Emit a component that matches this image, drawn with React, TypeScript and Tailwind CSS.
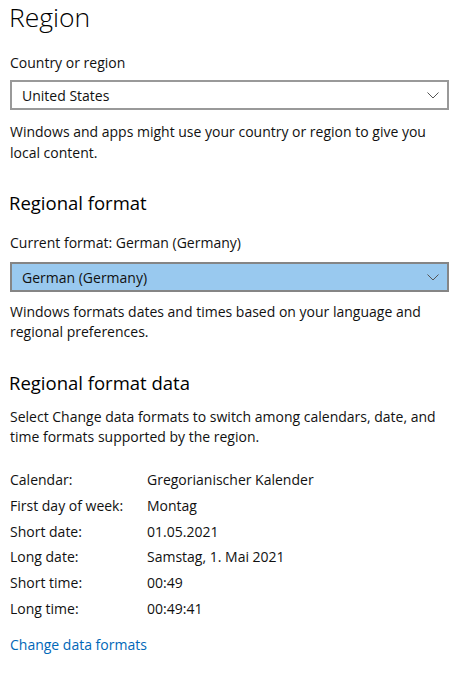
import React from "react";

function Chevron() {
  return (
    <svg width="12" height="7" viewBox="0 0 12 7" className="shrink-0">
      <path d="M0.5 0.5 L6 6 L11.5 0.5" fill="none" stroke="#555" strokeWidth="1" />
    </svg>
  );
}

const rows: [string, string][] = [
  ["Calendar:", "Gregorianischer Kalender"],
  ["First day of week:", "Montag"],
  ["Short date:", "01.05.2021"],
  ["Long date:", "Samstag, 1. Mai 2021"],
  ["Short time:", "00:49"],
  ["Long time:", "00:49:41"],
];

export default function App() {
  return (
    <div
      className="w-[474px] h-[681px] bg-white text-[#111] px-[10px] overflow-hidden"
      style={{ fontFamily: '"Open Sans", "Noto Sans", sans-serif' }}
    >
      <h1 className="text-[26.5px] leading-[34px] font-light ml-[-1px] text-black">Region</h1>
      <div className="mt-[19px] text-[14px] leading-[20px]">Country or region</div>
      <div className="mt-[7px] h-[30px] w-[439px] border-2 border-[#999] bg-white flex items-center justify-between pl-[10px] pr-[8px]">
        <span className="text-[14px]">United States</span>
        <Chevron />
      </div>
      <p className="mt-[11px] text-[14px] leading-[21px] w-[440px]">
        Windows and apps might use your country or region to give you local content.
      </p>
      <h2 className="mt-[26px] text-[18.5px] leading-[28px] ml-[-1px] text-black">Regional format</h2>
      <div className="mt-[16px] text-[14px] leading-[20px]">Current format: German (Germany)</div>
      <div className="mt-[9px] h-[30px] w-[439px] border-2 border-[#858585] bg-[#99c9ef] flex items-center justify-between pl-[10px] pr-[8px]">
        <span className="text-[14px]">German (Germany)</span>
        <Chevron />
      </div>
      <p className="mt-[10px] text-[14px] leading-[20px] w-[440px]">
        Windows formats dates and times based on your language and regional preferences.
      </p>
      <h2 className="mt-[27px] text-[18.5px] leading-[28px] ml-[-1px] text-black">Regional format data</h2>
      <p className="mt-[10px] text-[14px] leading-[20px] w-[440px]">
        Select Change data formats to switch among calendars, date, and time formats supported by the region.
      </p>
      <div className="mt-[20px] flex flex-col">
        {rows.map(([k, v]) => (
          <div key={k} className="flex text-[14px] leading-[25.8px]">
            <span className="w-[137px]">{k}</span>
            <span>{v}</span>
          </div>
        ))}
      </div>
      <div className="mt-[13px] text-[14px] leading-[20px] text-[#0067b8]">Change data formats</div>
    </div>
  );
}
